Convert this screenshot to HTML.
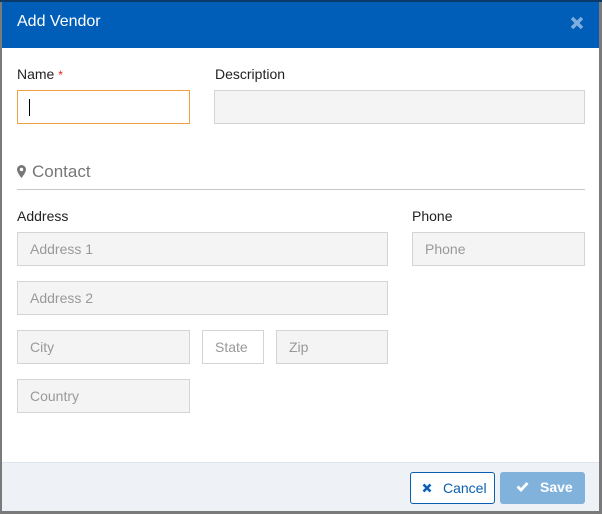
<!DOCTYPE html><html><head><style>
body{margin:0;width:602px;height:514px;background:#7a7a7a;position:relative;overflow:hidden;font-family:"Liberation Sans",sans-serif;}
.top{position:absolute;left:0;top:0;width:602px;height:2px;background:#0a3a6a}
.m{position:absolute;left:2px;top:2px;width:597px;height:508px;background:#fff}
.h{position:absolute;left:0;top:0;width:597px;height:46px;background:#005eb8;color:#fff;font-size:16px}
.h span{position:absolute;left:15px;top:11px}
.l{position:absolute;font-size:14px;color:#222}
.i{position:absolute;box-sizing:border-box;border:1px solid #d4d4d4;background:#f4f4f4;height:34px;font-size:14px;color:#999;padding:8px 12px}
.f{position:absolute;left:0;top:460px;width:597px;height:48px;background:#eef2f7;border-top:1px solid #dde5ec}
.b{position:absolute;box-sizing:border-box;height:32px;border-radius:3px;font-size:14px;padding-top:7px}
</style></head><body>
<div class="top"></div>
<div class="m">
<div class="h"><span>Add Vendor</span>
<svg style="position:absolute;left:568px;top:14px" width="14" height="14" viewBox="0 0 14 14"><path d="M2 2L12 12M12 2L2 12" stroke="#7eaee0" stroke-width="3.5"/></svg></div>
<div class="l" style="left:15px;top:64px">Name <span style="color:#e02020;font-size:12px">*</span></div>
<div class="l" style="left:213px;top:64px">Description</div>
<div class="i" style="left:15px;top:88px;width:173px;background:#fff;border-color:#f0a040"><div style="position:absolute;left:11px;top:8px;width:1px;height:17px;background:#000"></div></div>
<div class="i" style="left:212px;top:88px;width:371px"></div>
<svg style="position:absolute;left:15px;top:163px" width="9" height="13" viewBox="0 0 9 13"><path d="M4.5 0A4.5 4.5 0 0 0 0 4.5C0 7.5 4.5 13 4.5 13S9 7.5 9 4.5A4.5 4.5 0 0 0 4.5 0ZM4.5 2.8A1.7 1.7 0 1 1 4.5 6.2A1.7 1.7 0 1 1 4.5 2.8Z" fill="#777" fill-rule="evenodd"/></svg>
<div class="l" style="left:30px;top:160px;font-size:17px;color:#777">Contact</div>
<div style="position:absolute;left:15px;top:187px;width:568px;height:1px;background:#c8c8c8"></div>
<div class="l" style="left:15px;top:206px">Address</div>
<div class="l" style="left:410px;top:206px">Phone</div>
<div class="i" style="left:15px;top:230px;width:371px">Address 1</div>
<div class="i" style="left:410px;top:230px;width:173px">Phone</div>
<div class="i" style="left:15px;top:279px;width:371px">Address 2</div>
<div class="i" style="left:15px;top:328px;width:173px">City</div>
<div class="i" style="left:200px;top:328px;width:62px;background:#fff">State</div>
<div class="i" style="left:274px;top:328px;width:112px">Zip</div>
<div class="i" style="left:15px;top:377px;width:173px">Country</div>
<div class="f">
<div class="b" style="left:408px;top:9px;width:85px;border:1px solid #0a5fb0;background:#fff;color:#0a5fb0;padding-left:11px">
<svg width="10" height="10" viewBox="0 0 10 10" style="margin-right:11px"><path d="M1.5 1.5L8.5 8.5M8.5 1.5L1.5 8.5" stroke="#0a5fb0" stroke-width="2.6"/></svg>Cancel</div>
<div class="b" style="left:498px;top:9px;width:85px;background:#80b2db;color:#fff;font-weight:bold;padding-left:16px">
<svg width="13" height="11" viewBox="0 0 13 11" style="margin-right:11px"><path d="M1.5 5.5L5 9L11.5 2" stroke="#fff" stroke-width="2.8" fill="none"/></svg>Save</div>
</div>
</div>
</body></html>
